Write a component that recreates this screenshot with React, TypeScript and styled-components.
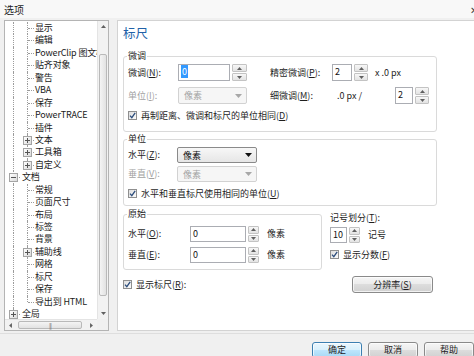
import React from 'react';
import styled, { createGlobalStyle } from 'styled-components';

const GlobalStyle = createGlobalStyle`
  html, body {
    margin: 0;
    padding: 0;
  }
  body {
    background: #f0f0f0;
    font-family: "Noto Sans CJK SC", "Noto Sans", "Liberation Sans", sans-serif;
  }
`;

type TreeNode = {
  text: string,
  depth: 1 | 2,
  exp?: '+' | '-',
  last?: boolean
}

const treeRows: TreeNode[] = [
  { text: '显示', depth: 2 },
  { text: '编辑', depth: 2 },
  { text: 'PowerClip 图文框', depth: 2 },
  { text: '贴齐对象', depth: 2 },
  { text: '警告', depth: 2 },
  { text: 'VBA', depth: 2 },
  { text: '保存', depth: 2 },
  { text: 'PowerTRACE', depth: 2 },
  { text: '插件', depth: 2 },
  { text: '文本', depth: 2, exp: '+' },
  { text: '工具箱', depth: 2, exp: '+' },
  { text: '自定义', depth: 2, exp: '+', last: true },
  { text: '文档', depth: 1, exp: '-' },
  { text: '常规', depth: 2 },
  { text: '页面尺寸', depth: 2 },
  { text: '布局', depth: 2 },
  { text: '标签', depth: 2 },
  { text: '背景', depth: 2 },
  { text: '辅助线', depth: 2, exp: '+' },
  { text: '网格', depth: 2 },
  { text: '标尺', depth: 2 },
  { text: '保存', depth: 2 },
  { text: '导出到 HTML', depth: 2, last: true },
  { text: '全局', depth: 1, exp: '+', last: true },
];

const Window = styled.div`
  width: 474px;
  height: 356px;
  overflow: hidden;
  background: #f0f0f0;
  color: #1e1e1e;
  font-size: 9px;
  display: flex;
  flex-direction: column;
`;

const TitleBar = styled.div`
  height: 18px;
  flex: none;
  display: flex;
  align-items: center;
  justify-content: space-between;
  padding-left: 4px;
  background: #f8f8f8;
  font-size: 10px;
`;

const CloseGlyph = styled.span`
  margin-right: -4px;
  font-size: 10px;
  color: #444;
`;

const Main = styled.div`
  height: 315px;
  box-sizing: border-box;
  padding: 2px 0 2px 4px;
  display: flex;
  gap: 8px;
  flex: none;
`;

/* ---------- tree ---------- */

const TreePanel = styled.div`
  width: 105px;
  flex: none;
  box-sizing: border-box;
  border: 1px solid #b4b4b4;
  background: #fff;
  display: grid;
  grid-template-columns: 1fr 11px;
  grid-template-rows: 1fr 11px;
`;

const TreeList = styled.div`
  overflow: hidden;
  padding: 1px 0 0 1px;
`;

const TreeRow = styled.div`
  height: 12.45px;
  display: flex;
  align-items: stretch;
  white-space: nowrap;
`;

const Cell = styled.span<{ $up?: boolean, $down?: boolean, $right?: boolean }>`
  position: relative;
  width: 14px;
  flex: none;
  display: flex;
  align-items: center;
  justify-content: center;

  &::before {
    content: '';
    position: absolute;
    left: 7px;
    top: ${p => p.$up ? '0' : '50%'};
    bottom: ${p => p.$down ? '0' : '50%'};
    border-left: 1px dotted #9c9c9c;
  }

  &::after {
    content: '';
    display: ${p => p.$right ? 'block' : 'none'};
    position: absolute;
    left: 8px;
    right: 0;
    top: 6px;
    border-top: 1px dotted #9c9c9c;
  }
`;

const Expander = styled.span<{ $open?: boolean }>`
  position: relative;
  z-index: 1;
  left: 0.5px;
  width: 7px;
  height: 7px;
  border: 1px solid #a4a4a4;
  background: linear-gradient(135deg, #ffffff, #dadada);

  &::before {
    content: '';
    position: absolute;
    left: 1px;
    right: 1px;
    top: 3px;
    border-top: 1px solid #555;
  }

  &::after {
    content: '';
    display: ${p => p.$open ? 'none' : 'block'};
    position: absolute;
    top: 1px;
    bottom: 1px;
    left: 3px;
    border-left: 1px solid #555;
  }
`;

const TreeText = styled.span<{ $ml: number }>`
  margin-left: ${p => p.$ml}px;
  line-height: 12.5px;
  color: #1a1a1a;
  letter-spacing: -0.15px;
`;

const VScroll = styled.div`
  background: #f2f2f2;
  border-left: 1px solid #e4e4e4;
  display: flex;
  flex-direction: column;
`;

const HScroll = styled.div`
  background: #f2f2f2;
  border-top: 1px solid #e4e4e4;
  display: flex;
`;

const ScrollArrow = styled.span`
  width: 11px;
  height: 11px;
  flex: none;
  display: flex;
  align-items: center;
  justify-content: center;
`;

const ScrollTrack = styled.div<{ $vertical?: boolean }>`
  flex: 1;
  display: flex;
  flex-direction: ${p => p.$vertical ? 'column' : 'row'};
  padding: ${p => p.$vertical ? '22px 0 12px' : '0 4px 0 2px'};
`;

const Thumb = styled.div<{ $vertical?: boolean }>`
  flex: 1;
  box-sizing: border-box;
  border: 1px solid #b9b9b9;
  border-radius: 2px;
  margin: ${p => p.$vertical ? '0 1px' : '1px 0'};
  background: ${p => p.$vertical
    ? 'linear-gradient(90deg, #f4f4f4, #e2e2e2)'
    : 'linear-gradient(#f4f4f4, #e2e2e2)'};
  display: flex;
  align-items: center;
  justify-content: center;
  font-size: 6px;
  letter-spacing: -1px;
  color: #777;
`;

const Corner = styled.div`
  background: #f0f0f0;
`;

function Arrow({ dir }: { dir: 'up' | 'down' | 'left' | 'right' }) {
  const pts = {
    up: '0,4 3.5,0 7,4',
    down: '0,0 3.5,4 7,0',
    left: '4,0 0,3.5 4,7',
    right: '0,0 4,3.5 0,7',
  }[dir];
  const vertical = dir === 'up' || dir === 'down';
  return (
    <svg width={vertical ? 5 : 3} height={vertical ? 3 : 5} viewBox={vertical ? '0 0 7 4' : '0 0 4 7'}>
      <polygon points={pts} fill="#606060" />
    </svg>
  );
}

function Tree() {
  return (
    <TreePanel>
      <TreeList>
        {treeRows.map((n, i) => (
          <TreeRow key={i}>
            {n.depth === 1 ? (
              <Cell $up $down={!n.last} $right>
                {n.exp && <Expander $open={n.exp === '-'} />}
              </Cell>
            ) : (
              <>
                <Cell $up $down />
                <Cell $up $down={!n.last} $right>
                  {n.exp && <Expander $open={n.exp === '-'} />}
                </Cell>
              </>
            )}
            <TreeText $ml={n.depth === 1 ? 2 : 1}>{n.text}</TreeText>
          </TreeRow>
        ))}
      </TreeList>
      <VScroll>
        <ScrollArrow><Arrow dir="up" /></ScrollArrow>
        <ScrollTrack $vertical>
          <Thumb $vertical />
        </ScrollTrack>
        <ScrollArrow><Arrow dir="down" /></ScrollArrow>
      </VScroll>
      <HScroll>
        <ScrollArrow><Arrow dir="left" /></ScrollArrow>
        <ScrollTrack>
          <Thumb>|||</Thumb>
        </ScrollTrack>
        <ScrollArrow><Arrow dir="right" /></ScrollArrow>
      </HScroll>
      <Corner />
    </TreePanel>
  );
}

/* ---------- settings panel ---------- */

const SettingsPanel = styled.section`
  flex: 1;
  margin-right: -6px;
  box-sizing: border-box;
  border: 1px solid #d3d3d3;
  background: #fff;
  padding-left: 5px;
  display: flex;
  flex-direction: column;
`;

const PanelTitle = styled.h2`
  margin: 0;
  height: 23px;
  line-height: 24px;
  padding-left: 0;
  font-size: 12.5px;
  font-weight: normal;
  color: #2161a8;
`;

const Group = styled.fieldset<{ $w: number, $mt?: number, $pb?: number }>`
  width: ${p => p.$w}px;
  box-sizing: border-box;
  margin: ${p => p.$mt ?? 0}px 0 0 0;
  padding: 0 4px ${p => p.$pb ?? 0}px;
  border: 1px solid #dadada;
  border-radius: 3px;
  min-width: 0;
  flex: none;
`;

const Legend = styled.legend`
  padding: 0 1px;
  margin-left: -1px;
  font-size: 9px;
  line-height: 12px;
  color: #1e1e1e;
`;

const FieldRow = styled.div<{ $h: number, $mt?: number }>`
  display: flex;
  align-items: center;
  height: ${p => p.$h}px;
  margin-top: ${p => p.$mt ?? 0}px;
  white-space: nowrap;
`;

const Label = styled.span<{ $w?: number, $ml?: number, $off?: boolean }>`
  flex: none;
  width: ${p => p.$w ? `${p.$w}px` : 'auto'};
  margin-left: ${p => p.$ml ?? 0}px;
  color: ${p => p.$off ? '#a2a2a2' : '#1e1e1e'};
  line-height: 12px;
`;

const SpinWrap = styled.div`
  display: flex;
  gap: 2px;
  height: 100%;
  flex: none;
`;

const SpinField = styled.div<{ $w: number }>`
  width: ${p => p.$w}px;
  box-sizing: border-box;
  border: 1px solid #abadb3;
  background: #fff;
  padding: 1px 2px 0;
  line-height: 11px;
  color: #111;
`;

const Selected = styled.span`
  background: #3399ff;
  color: #fff;
  padding: 0 1px;
`;

const Spinner = styled.div<{ $w: number }>`
  width: ${p => p.$w}px;
  display: flex;
  flex-direction: column;
  gap: 1px;
`;

const SpinHalf = styled.span`
  flex: 1;
  box-sizing: border-box;
  border: 1px solid #c3c3c3;
  border-radius: 1px;
  background: linear-gradient(#f7f7f7, #e3e3e3);
  display: flex;
  align-items: center;
  justify-content: center;
`;

function SpinBox({ value, inputW, spinW = 14, selected }: { value: string, inputW: number, spinW?: number, selected?: boolean }) {
  return (
    <SpinWrap>
      <SpinField $w={inputW}>{selected ? <Selected>{value}</Selected> : value}</SpinField>
      <Spinner $w={spinW}>
        <SpinHalf><Arrow dir="up" /></SpinHalf>
        <SpinHalf><Arrow dir="down" /></SpinHalf>
      </Spinner>
    </SpinWrap>
  );
}

const SelectBox = styled.div<{ $w: number, $off?: boolean }>`
  width: ${p => p.$w}px;
  height: 100%;
  flex: none;
  box-sizing: border-box;
  border: 1px solid ${p => p.$off ? '#d2d2d2' : '#8a8a8a'};
  border-radius: 2px;
  background: ${p => p.$off ? '#f6f6f6' : 'linear-gradient(#f7f7f7, #e6e6e6)'};
  color: ${p => p.$off ? '#a5a5a5' : '#111'};
  display: flex;
  align-items: center;
  justify-content: space-between;
  padding: 0 4px 0 5px;
`;

function Select({ value, w, off }: { value: string, w: number, off?: boolean }) {
  return (
    <SelectBox $w={w} $off={off}>
      <span>{value}</span>
      <svg width="7" height="4" viewBox="0 0 7 4">
        <polygon points="0,0 7,0 3.5,4" fill={off ? '#a8a8a8' : '#111'} />
      </svg>
    </SelectBox>
  );
}

const CheckRow = styled.label<{ $mt?: number }>`
  display: flex;
  align-items: center;
  gap: 4px;
  height: 13px;
  margin-top: ${p => p.$mt ?? 0}px;
  white-space: nowrap;
  color: #1e1e1e;
`;

const CheckBox = styled.span`
  width: 9px;
  height: 9px;
  flex: none;
  box-sizing: border-box;
  border: 1px solid #8f8f8f;
  background: linear-gradient(135deg, #dedede, #fbfbfb);
  display: flex;
  align-items: center;
  justify-content: center;
`;

function Check({ children, mt }: { children: React.ReactNode, mt?: number }) {
  return (
    <CheckRow $mt={mt}>
      <CheckBox>
        <svg width="7" height="7" viewBox="0 0 7 7">
          <path d="M1 3.6 L2.8 5.6 L6.2 0.8" stroke="#2c4d7c" strokeWidth="1.3" fill="none" />
        </svg>
      </CheckBox>
      <span>{children}</span>
    </CheckRow>
  );
}

const Split = styled.div`
  display: flex;
  align-items: flex-start;
  gap: 8px;
  margin-top: 2px;
`;

const SideColumn = styled.div`
  display: flex;
  flex-direction: column;
  padding-top: 4px;
`;

const BottomRow = styled.div`
  display: flex;
  align-items: center;
  justify-content: space-between;
  width: 310px;
  margin-top: 6px;
  height: 17px;
`;

const PushButton = styled.button<{ $w: number, $h: number, $default?: boolean }>`
  width: ${p => p.$w}px;
  height: ${p => p.$h}px;
  box-sizing: border-box;
  padding: 0;
  border: 1px solid ${p => p.$default ? '#3c7fb1' : '#8a8a8a'};
  border-radius: 3px;
  background: ${p => p.$default
    ? 'linear-gradient(#eaf6fd, #d9f0fc 50%, #bee6fd 50%, #a7d9f5)'
    : 'linear-gradient(#f6f6f6, #ebebeb 50%, #dddddd 50%, #d1d1d1)'};
  box-shadow: inset 0 0 0 1px rgba(255, 255, 255, 0.7);
  font-family: inherit;
  font-size: 9px;
  color: #1e1e1e;
  line-height: 12px;
  flex: none;
`;

const Footer = styled.footer`
  flex: 1;
  border-top: 1px solid #dedede;
  padding: 8px 0 0 312px;
  display: flex;
  gap: 6px;
  align-items: flex-start;
`;

const U = styled.u`
  text-underline-offset: 1px;
`;

export default function App() {
  return (
    <Window>
      <GlobalStyle />
      <TitleBar>
        <span>选项</span>
        <CloseGlyph>✕</CloseGlyph>
      </TitleBar>
      <Main>
        <Tree />
        <SettingsPanel>
          <PanelTitle>标尺</PanelTitle>

          <Group $w={314} $mt={6} $pb={9}>
            <Legend>微调</Legend>
            <FieldRow $h={17} $mt={2}>
              <Label $w={50}>微调(<U>N</U>):</Label>
              <SpinBox value="0" inputW={52} spinW={15} selected />
              <Label $w={62} $ml={23}>精密微调(<U>P</U>):</Label>
              <SpinBox value="2" inputW={20} spinW={14} />
              <Label $ml={7}>x .0 px</Label>
            </FieldRow>
            <FieldRow $h={17} $mt={6}>
              <Label $w={50} $off>单位(<U>I</U>):</Label>
              <Select value="像素" w={69} off />
              <Label $w={62} $ml={23}>细微调(<U>M</U>):</Label>
              <Label $w={58} $ml={5}>.0 px /</Label>
              <SpinBox value="2" inputW={18} spinW={14} />
            </FieldRow>
            <Check mt={5}>再制距离、微调和标尺的单位相同(<U>D</U>)</Check>
          </Group>

          <Group $w={314} $mt={1} $pb={5}>
            <Legend>单位</Legend>
            <FieldRow $h={16} $mt={2}>
              <Label $w={49}>水平(<U>Z</U>):</Label>
              <Select value="像素" w={80} />
            </FieldRow>
            <FieldRow $h={16} $mt={3}>
              <Label $w={49} $off>垂直(<U>V</U>):</Label>
              <Select value="像素" w={80} off />
            </FieldRow>
            <Check mt={5}>水平和垂直标尺使用相同的单位(<U>U</U>)</Check>
          </Group>

          <Split>
            <Group $w={199} $pb={6}>
              <Legend>原始</Legend>
              <FieldRow $h={16} $mt={6}>
                <Label $w={62}>水平(<U>O</U>):</Label>
                <SpinBox value="0" inputW={56} spinW={11} />
                <Label $ml={8}>像素</Label>
              </FieldRow>
              <FieldRow $h={16} $mt={5}>
                <Label $w={62}>垂直(<U>E</U>):</Label>
                <SpinBox value="0" inputW={56} spinW={11} />
                <Label $ml={8}>像素</Label>
              </FieldRow>
            </Group>
            <SideColumn>
              <Label>记号划分(<U>T</U>):</Label>
              <FieldRow $h={16} $mt={3}>
                <SpinBox value="10" inputW={17} spinW={11} />
                <Label $ml={8}>记号</Label>
              </FieldRow>
              <Check mt={5}>显示分数(<U>F</U>)</Check>
            </SideColumn>
          </Split>

          <BottomRow>
            <Check>显示标尺(<U>R</U>):</Check>
            <PushButton $w={81} $h={17}>分辨率(<U>S</U>)</PushButton>
          </BottomRow>
        </SettingsPanel>
      </Main>
      <Footer>
        <PushButton $w={50} $h={16} $default>确定</PushButton>
        <PushButton $w={50} $h={16}>取消</PushButton>
        <PushButton $w={50} $h={16}>帮助</PushButton>
      </Footer>
    </Window>
  );
}
